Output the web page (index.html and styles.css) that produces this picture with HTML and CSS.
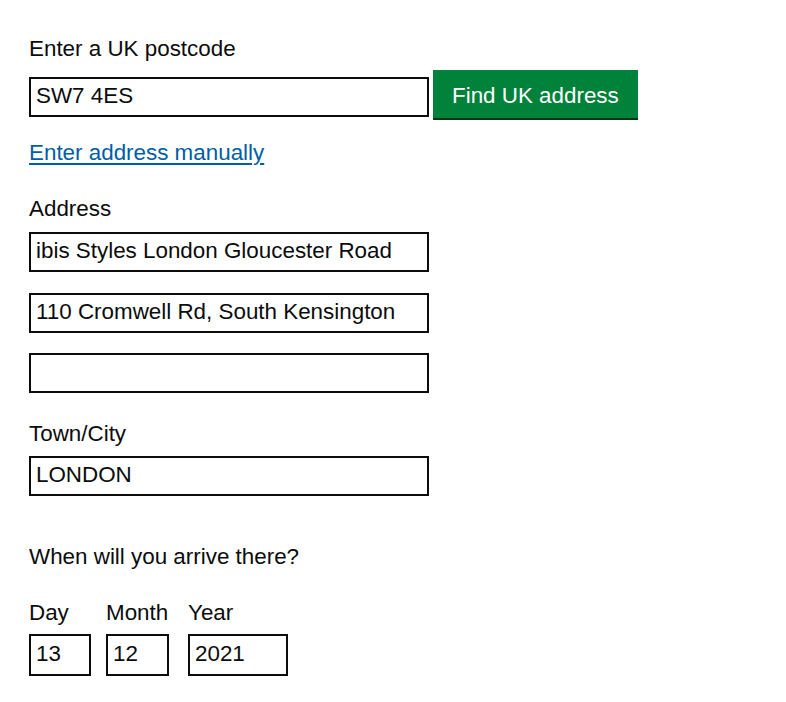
FILE: index.html
```html
<!DOCTYPE html>
<html lang="en">
<head>
<meta charset="utf-8">
<title>Address</title>
<link rel="stylesheet" href="styles.css">
</head>
<body>
<main class="page">
  <div class="group-postcode">
    <label class="label" for="postcode">Enter a UK postcode</label>
    <div class="postcode-row">
      <input class="input input-postcode" id="postcode" type="text" value="SW7 4ES">
      <button class="button" type="button">Find UK address</button>
    </div>
  </div>

  <p class="manual"><a class="link" href="#">Enter address manually</a></p>

  <div class="group-address">
    <label class="label" for="addr1">Address</label>
    <input class="input input-wide" id="addr1" type="text" value="ibis Styles London Gloucester Road">
    <input class="input input-wide" type="text" value="110 Cromwell Rd, South Kensington">
    <input class="input input-wide" type="text" value="">
  </div>

  <div class="group-town">
    <label class="label" for="town">Town/City</label>
    <input class="input input-wide" id="town" type="text" value="LONDON">
  </div>

  <fieldset class="fieldset">
    <legend class="legend">When will you arrive there?</legend>
    <div class="date">
      <div class="date-item">
        <label class="label label-date" for="day">Day</label>
        <input class="input input-date" id="day" type="text" value="13">
      </div>
      <div class="date-item">
        <label class="label label-date" for="month">Month</label>
        <input class="input input-date" id="month" type="text" value="12">
      </div>
      <div class="date-item">
        <label class="label label-date" for="year">Year</label>
        <input class="input input-date" id="year" type="text" value="2021">
      </div>
    </div>
  </fieldset>
</main>
</body>
</html>
```

FILE: styles.css
```css
* { box-sizing: border-box; }

html, body {
  margin: 0;
  padding: 0;
  background: #ffffff;
}

body {
  font-family: "Liberation Sans", Arial, sans-serif;
  font-size: 22.4px;
  line-height: 29px;
  color: #0b0c0c;
}

.page {
  padding: 34px 0 0 29px;
}

.label {
  display: block;
  line-height: 29px;
  margin: 0 0 9px;
}

.input {
  display: block;
  height: 40px;
  margin: 0;
  padding: 0 5px 2px;
  border: 2px solid #0b0c0c;
  border-radius: 0;
  background: #ffffff;
  font-family: inherit;
  font-size: 22.4px;
  color: #0b0c0c;
  outline: none;
}

.group-postcode .label {
  margin-bottom: 7px;
}

.postcode-row {
  display: flex;
  align-items: flex-start;
  gap: 4px;
}

.input-postcode {
  width: 400px;
  margin-top: 7px;
}

.button {
  height: 48px;
  margin: 0;
  padding: 3px 19px 0;
  border: 0;
  border-radius: 0;
  background: #00823b;
  box-shadow: 0 2px 0 #003618;
  color: #ffffff;
  font-family: inherit;
  font-size: 22.4px;
  line-height: 45px;
  cursor: pointer;
}

.manual {
  margin: 20px 0 0;
  line-height: 29px;
}

.link {
  color: #005ea5;
  text-decoration: underline;
  text-decoration-thickness: 1.5px;
  text-underline-offset: 3px;
}

.group-address {
  margin-top: 27px;
  display: flex;
  flex-direction: column;
  gap: 20.6px;
}

.group-address .label {
  margin-bottom: -11.6px;
}

.input-wide {
  width: 400px;
}

.group-town {
  margin-top: 26px;
}

.group-town .label {
  margin-bottom: 8px;
}

.fieldset {
  margin: 46px 0 0;
  padding: 0;
  border: 0;
  min-width: 0;
}

.legend {
  padding: 0;
  line-height: 29px;
  margin: 0 0 27px;
}

.date {
  display: grid;
  grid-template-columns: 62px 67px 100px;
  column-gap: 15px;
}

.label-date {
  margin-bottom: 7px;
}

.input-date {
  height: 42px;
  width: 100%;
}

.date-item:nth-child(2) .input-date {
  width: 63px;
}
```
